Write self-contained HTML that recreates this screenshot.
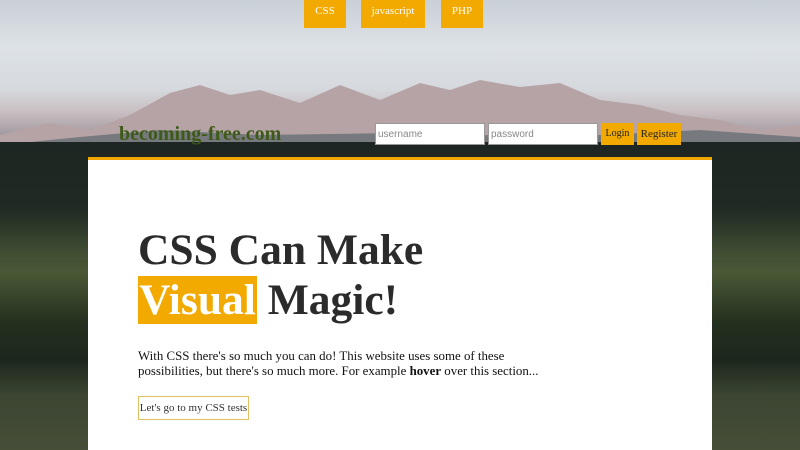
<!DOCTYPE html>
<html><head><meta charset="utf-8"><style>
*{margin:0;padding:0;box-sizing:border-box}
html,body{width:800px;height:450px;overflow:hidden}
body{position:relative;font-family:"Liberation Serif",serif;background:#2a3424}
.sky{position:absolute;left:0;top:0;width:800px;height:160px;background:linear-gradient(180deg,#c9d0d6 0%,#dde2e6 30%,#d6dade 55%,#c9bfc2 70%,#a8a0a6 82%,#7d8388 92%,#4c5452 100%)}
.mtn{position:absolute;left:0;top:75px;width:800px;height:85px}
.forest{position:absolute;left:0;top:142px;width:800px;height:310px;background:linear-gradient(180deg,#1d2622 0%,#202b24 22%,#3f4c32 35%,#4a5836 42%,#25301f 58%,#1d261c 70%,#3c4632 82%,#474e38 100%)}
.nav{position:absolute;top:0;height:28px;background:#f2a900;color:#fff;font-size:11px;text-align:center;line-height:22px}
.logo{position:absolute;left:119px;top:123px;font-size:20px;font-weight:bold;color:#3e5a18}
.in{position:absolute;top:123px;height:22px;background:#fff;border:1px solid #999;font-family:"Liberation Sans",sans-serif;font-size:10px;color:#888;padding:5px 2px}
.btn{position:absolute;top:123px;height:22px;background:#f2a900;font-size:11px;color:#222;text-align:center;line-height:22px}
.panel{position:absolute;left:88px;top:157px;width:624px;height:300px;background:#fff;border-top:3px solid #f0a800}
h1{position:absolute;left:50px;top:65px;font-size:43.5px;line-height:50px;color:#2b2b2b;font-weight:bold;white-space:nowrap}
h1 span{background:#f2a900;color:#fff;padding:0 1px}
p{position:absolute;left:50px;top:189px;font-size:12.9px;line-height:15px;color:#111;width:410px}
.cta{position:absolute;left:50px;top:236px;width:111px;height:24px;border:1px solid #e0c060;font-size:11px;line-height:22px;text-align:center;color:#333}
</style></head><body>
<div class="sky"></div>
<svg class="mtn" viewBox="0 0 800 85" preserveAspectRatio="none"><path d="M0 60 L50 48 L90 55 L130 40 L170 18 L200 10 L230 20 L260 15 L300 28 L340 10 L380 25 L420 8 L450 15 L480 5 L520 12 L560 8 L600 25 L640 30 L680 40 L720 45 L760 55 L800 50 L800 85 L0 85Z" fill="#b6a3a6"/><path d="M0 70 L80 62 L160 55 L260 60 L400 58 L560 62 L700 55 L800 62 L800 85 L0 85Z" fill="#76797e"/></svg>
<div class="forest"></div>
<div class="nav" style="left:304px;width:42px">CSS</div>
<div class="nav" style="left:361px;width:64px">javascript</div>
<div class="nav" style="left:441px;width:42px">PHP</div>
<div class="logo">becoming-free.com</div>
<div class="in" style="left:375px;width:110px">username</div>
<div class="in" style="left:488px;width:110px">password</div>
<div class="btn" style="left:601px;width:33px;font-size:10px">Login</div>
<div class="btn" style="left:637px;width:44px">Register</div>
<div class="panel">
<h1>CSS Can Make<br><span>Visual</span> Magic!</h1>
<p>With CSS there's so much you can do! This website uses some of these possibilities, but there's so much more. For example <b>hover</b> over this section...</p>
<div class="cta">Let's go to my CSS tests</div>
</div>
</body></html>
